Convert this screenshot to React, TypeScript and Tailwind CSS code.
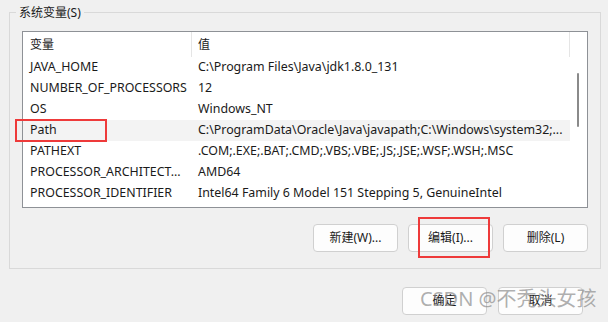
const rows = [
  { name: 'JAVA_HOME', value: 'C:\\Program Files\\Java\\jdk1.8.0_131' },
  { name: 'NUMBER_OF_PROCESSORS', value: '12' },
  { name: 'OS', value: 'Windows_NT' },
  { name: 'Path', value: 'C:\\ProgramData\\Oracle\\Java\\javapath;C:\\Windows\\system32;...', active: true },
  { name: 'PATHEXT', value: '.COM;.EXE;.BAT;.CMD;.VBS;.VBE;.JS;.JSE;.WSF;.WSH;.MSC' },
  { name: 'PROCESSOR_ARCHITECT...', value: 'AMD64' },
  { name: 'PROCESSOR_IDENTIFIER', value: 'Intel64 Family 6 Model 151 Stepping 5, GenuineIntel' },
];

function Btn({ label, marked }: { label: string; marked?: boolean }) {
  return (
    <div className="relative">
      <button className="w-[85px] h-[28px] bg-[#fdfdfd] border border-[#d0d0d0] rounded-[4px] text-[12px] text-[#1a1a1a] flex items-center justify-center">
        {label}
      </button>
      {/* red annotation box */}
      {marked && (
        <span className="pointer-events-none absolute left-[10px] top-[-7px] w-[72px] h-[41px] border-2 border-[#ee3a3a]" />
      )}
    </div>
  );
}

export default function App() {
  return (
    <div
      className="relative w-[608px] h-[322px] bg-[#f0f0f0] overflow-hidden text-[#1a1a1a]"
      style={{ fontFamily: '"Noto Sans", "Noto Sans CJK SC", sans-serif' }}
    >
      <div className="pt-[12px] pl-[9px] pr-[7px]">
        <div className="relative border border-[#d9d9d9] pt-[18px] pl-[12px] pr-[12px] pb-[16px]">
          <span className="absolute left-[6px] top-[-8px] px-[3px] bg-[#f0f0f0] text-[12px] leading-[16px]">
            系统变量(S)
          </span>

          {/* list view */}
          <div className="relative w-[566px] h-[177px] bg-white border border-[#8e9196] flex">
            <div className="w-[547px] flex flex-col">
              <div className="h-[25px] flex items-center text-[12px]">
                <div className="w-[169px] h-full pl-[7px] flex items-center border-r border-[#e5e5e5]">变量</div>
                <div className="flex-1 h-full pl-[6px] flex items-center border-r border-[#e5e5e5]">值</div>
              </div>
              {rows.map((r) => (
                <div
                  key={r.name}
                  className={`relative h-[21px] flex items-center text-[12.4px] whitespace-nowrap ${r.active ? 'bg-[#f3f3f3]' : ''}`}
                >
                  <div className="w-[169px] pl-[7px]">{r.name}</div>
                  <div className="flex-1 pl-[6px]">{r.value}</div>
                  {r.active && (
                    <span className="pointer-events-none absolute left-[-8px] top-[-1px] w-[92px] h-[23px] border-2 border-[#ee3a3a]" />
                  )}
                </div>
              ))}
            </div>
            {/* thin scrollbar */}
            <div className="flex-1 relative">
              <div className="absolute left-[7px] top-[41px] w-[2px] h-[54px] bg-[#8a8a8a] rounded-full" />
            </div>
          </div>

          <div className="flex justify-end gap-[10px] mt-[16px]">
            <Btn label="新建(W)..." />
            <Btn label="编辑(I)..." marked />
            <Btn label="删除(L)" />
          </div>
        </div>
      </div>

      <div className="flex justify-end gap-[11px] mt-[18px] pr-[25px]">
        <button className="w-[85px] h-[28px] bg-[#fdfdfd] border border-[#d0d0d0] rounded-[4px] text-[12px]">确定</button>
        <button className="w-[85px] h-[28px] bg-[#fdfdfd] border border-[#d0d0d0] rounded-[4px] text-[12px]">取消</button>
      </div>

      {/* watermark */}
      <span className="pointer-events-none absolute left-[420px] top-[286px] text-[20px] leading-[26px] text-[#8c8c8c]/70 whitespace-nowrap">
        CSDN @不秃头女孩
      </span>
    </div>
  );
}
